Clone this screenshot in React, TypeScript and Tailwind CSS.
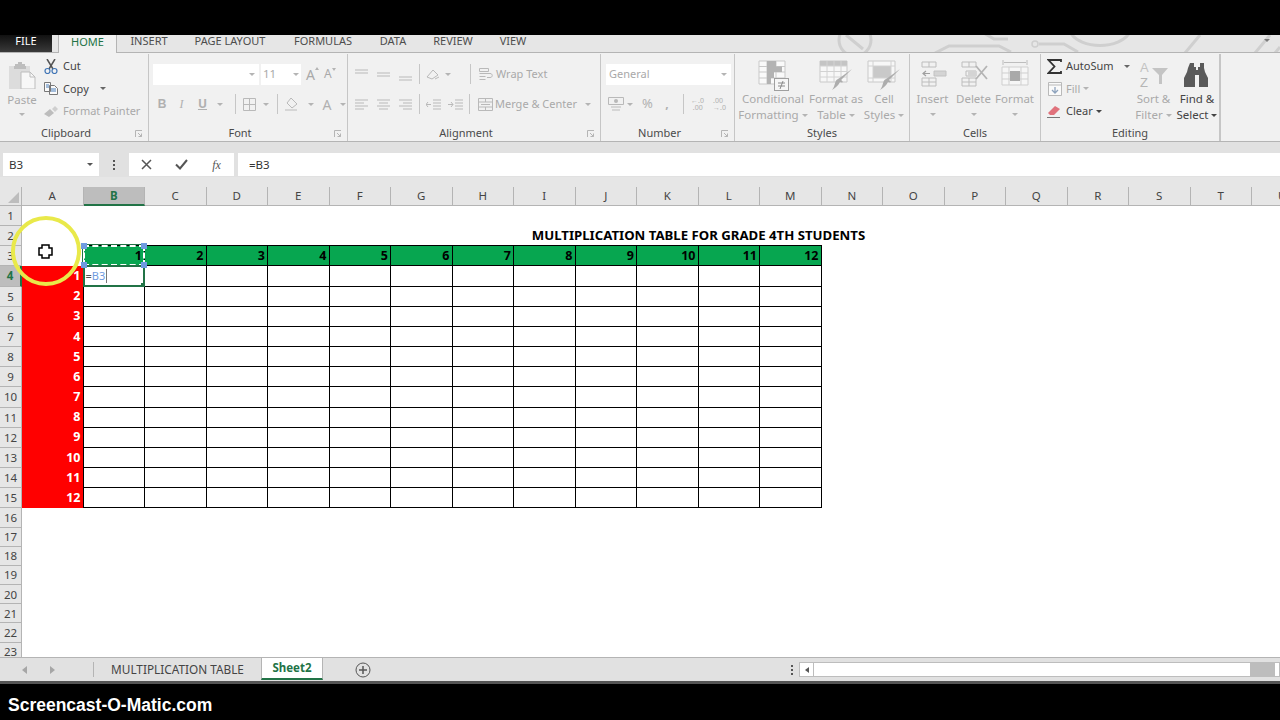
import React from 'react';

const SANS = '"Noto Sans", "Open Sans", sans-serif';
const COLS = ['A', 'B', 'C', 'D', 'E', 'F', 'G', 'H', 'I', 'J', 'K', 'L', 'M', 'N', 'O', 'P', 'Q', 'R', 'S', 'T', 'U'];
const ROWS = Array.from({ length: 23 }, (_, i) => i + 1);

function Caret({ className = 'border-t-[#b4b4b4]' }: { className?: string }) {
  return <span className={`inline-block h-0 w-0 border-x-[3px] border-t-[3px] border-x-transparent ${className}`} />;
}

function Slot({ w, children }: { w: number; children?: React.ReactNode }) {
  return (
    <div className="flex shrink-0 items-center justify-center" style={{ width: w }}>
      {children}
    </div>
  );
}

function Sep({ h = 'h-[20px]' }: { h?: string }) {
  return <div className={`w-px shrink-0 bg-[#c6c6c6] ${h}`} />;
}

function Launcher() {
  return (
    <svg width="8" height="8" viewBox="0 0 8 8" className="shrink-0">
      <path d="M0.500 7V0.500H7M3 3l3.500 3.500M6.500 3.500v3h-3" fill="none" stroke="#b5b5b5" />
    </svg>
  );
}

function GroupLabel({ children, launcher = true }: { children: string; launcher?: boolean }) {
  return (
    <div className={`relative flex h-[16px] items-center justify-center text-[11px] text-[#4a4a4a] ${launcher ? 'pr-[16px]' : ''}`}>
      {children}
      {launcher && (
        <span className="absolute right-[5px] top-[5px] flex">
          <Launcher />
        </span>
      )}
    </div>
  );
}

function Lines({ kind }: { kind: 'top' | 'mid' | 'bot' | 'left' | 'center' | 'right' }) {
  const d = {
    top: 'M1 2h13M1 5h13',
    mid: 'M1 5h13M1 8h13',
    bot: 'M1 9h13M1 12h13',
    left: 'M1 2h13M1 5h9M1 8h13M1 11h9',
    center: 'M1 2h13M3 5h9M1 8h13M3 11h9',
    right: 'M1 2h13M5 5h9M1 8h13M5 11h9',
  }[kind];
  return (
    <svg width="15" height="13" viewBox="0 0 15 13">
      <path d={d} stroke="#b9b9b9" fill="none" />
    </svg>
  );
}

function BigLabel({ lines, dark = false, caret = true }: { lines: string[]; dark?: boolean; caret?: boolean }) {
  return (
    <div className={`flex flex-col items-center text-[11.5px] leading-[16px] ${dark ? 'text-[#444444]' : 'text-[#a9a9a9]'}`}>
      <span className="whitespace-nowrap">{lines[0]}</span>
      <span className="flex items-center gap-[3px] whitespace-nowrap">
        {lines[1]}
        {caret && <Caret className={dark ? 'border-t-[#444444]' : 'border-t-[#b4b4b4]'} />}
      </span>
    </div>
  );
}

function TableBrush({ variant }: { variant: 'cond' | 'table' | 'cell' }) {
  if (variant === 'cond') {
    return (
      <svg width="31" height="31" viewBox="0 0 31 31">
        <path d="M1 1h26v23H1zM1 6.500h26M1 12h26M1 18h26M9 1v23M18 1v23" fill="#fafafa" stroke="#c9c9c9" />
        <path d="M9 1h9v5.500h-9zM9 6.500h15v5.500H9zM9 12h7v6H9zM9 18h4v6H9z" fill="#b3b3b3" />
        <rect x="16.500" y="18.500" width="14" height="12" fill="#f6f6f6" stroke="#9f9f9f" />
        <path d="M20 23h7M20 26h7M25 21l-3 8" stroke="#8a8a8a" fill="none" />
      </svg>
    );
  }
  return (
    <svg width="34" height="31" viewBox="0 0 34 31">
      <path d="M1 1h27v21H1z" fill="#f7f7f7" stroke="#c9c9c9" />
      {variant === 'table' ? (
        <g>
          <path d="M1 1h27v5H1z" fill="#c4c4c4" />
          <path d="M1 6h27M1 11.500h27M1 17h27M8 1v21M15 1v21M22 1v21" stroke="#d2d2d2" />
        </g>
      ) : (
        <g>
          <rect x="6" y="6" width="18" height="12" fill="#c9c9c9" />
          <path d="M1 6h27M1 18h27M6 1v21M24 1v21" stroke="#d2d2d2" />
        </g>
      )}
      <path d="M33 9L22 20c3 2 2 3-1 2-2 4-5 6-8 8 4-5 2-9 6-11l3-2z" fill="#adadad" />
    </svg>
  );
}

function Tab({ children, w }: { children: string; w: number }) {
  return (
    <div className="flex shrink-0 items-center justify-center pb-[4px] text-[11px] text-[#4d4d4d]" style={{ width: w }}>
      <span className="whitespace-nowrap">{children}</span>
    </div>
  );
}

function TabBar() {
  return (
    <div className="relative flex h-[18px] shrink-0 border-b border-[#b4b4b4] bg-[#e6e6e6]">
      <svg className="absolute left-[760px] top-0" width="520" height="17" viewBox="0 0 520 17">
        <g fill="none" stroke="#cfcfcf" strokeWidth="3">
          <circle cx="95" cy="5" r="16" />
          <path d="M86 0l17 14M175 18l14-7h50l12 6M248 4h-14l-12-7" />
          <circle cx="275" cy="9" r="3" strokeWidth="1.500" />
          <path d="M279 9h25l14 8M310-3c10 18 50 18 60 0M425 18l15-18M495 18l15-18M515 18l5-6" />
        </g>
      </svg>
      <div className="flex w-[52px] shrink-0 items-center justify-center bg-gradient-to-b from-[#111111] to-[#3a3a3a] pb-[4px] text-[11px] text-white">
        FILE
      </div>
      <div className="relative ml-[6px] mb-[-1px] flex w-[59px] shrink-0 items-center justify-center border-x border-[#b4b4b4] bg-[#f1f1f1] pb-[4px] text-[11px] text-[#217346]">
        HOME
      </div>
      <Tab w={64}>INSERT</Tab>
      <Tab w={98}>PAGE LAYOUT</Tab>
      <Tab w={88}>FORMULAS</Tab>
      <Tab w={52}>DATA</Tab>
      <Tab w={68}>REVIEW</Tab>
      <Tab w={52}>VIEW</Tab>
      <span className="absolute right-[10px] top-[4px] flex">
        <Caret className="border-t-[#7a7a7a]" />
      </span>
    </div>
  );
}

function Clipboard() {
  return (
    <div className="flex w-[149px] shrink-0 flex-col border-r border-[#c6c6c6]">
      <div className="flex h-[71px]">
        <div className="flex w-[44px] flex-col items-center pt-[8px]">
          <svg width="28" height="27" viewBox="0 0 28 27">
            <path d="M1 4h21v23H1z" fill="#dcdcdc" />
            <path d="M7 4V2h3V0h4v2h3v2h1v3H6V4z" fill="#bdbdbd" />
            <path d="M13 10h9l5 5v12H13z" fill="#f7f7f7" stroke="#bdbdbd" />
            <path d="M22 10v5h5" fill="none" stroke="#bdbdbd" />
          </svg>
          <span className="mt-[3px] text-[11.5px] leading-[15px] text-[#a9a9a9]">Paste</span>
          <span className="mt-[6px] flex">
            <Caret />
          </span>
        </div>
        <div className="flex flex-col pt-[1px]">
          <div className="flex h-[22.5px] items-center gap-[5px] text-[11px] text-[#444444]">
            <svg width="14" height="15" viewBox="0 0 14 15">
              <path d="M3 0l6 10M11 0L5 10" stroke="#555555" strokeWidth="1.500" fill="none" />
              <circle cx="3.500" cy="12" r="2.500" fill="none" stroke="#3f74b5" strokeWidth="1.200" />
              <circle cx="10.500" cy="12" r="2.500" fill="none" stroke="#3f74b5" strokeWidth="1.200" />
            </svg>
            Cut
          </div>
          <div className="flex h-[22.5px] items-center text-[11px] text-[#444444]">
            <svg width="14" height="13" viewBox="0 0 14 13" className="mr-[5px]">
              <path d="M0.500 0.500h6v9h-6zM5.500 3.500h5l3 3v6h-8z" fill="#fafafa" stroke="#777777" />
              <path d="M2 3h3M2 5h3M7 7h5M7 9h5" stroke="#4a7ebb" />
            </svg>
            Copy
            <span className="ml-[11px] flex">
              <Caret className="border-t-[#666666]" />
            </span>
          </div>
          <div className="flex h-[22.5px] items-center gap-[5px] text-[11px] text-[#a9a9a9]">
            <svg width="14" height="11" viewBox="0 0 14 11">
              <path d="M0 8l6-5 4 4-5 4z" fill="#bdbdbd" />
              <path d="M8 3l3-3 3 3-3 3z" fill="#cfcfcf" />
            </svg>
            Format Painter
          </div>
        </div>
      </div>
      <GroupLabel>Clipboard</GroupLabel>
    </div>
  );
}

function Font() {
  return (
    <div className="flex w-[199px] shrink-0 flex-col border-r border-[#c6c6c6]">
      <div className="h-[71px] pl-[4px] pt-[10px]">
        <div className="flex h-[20px] items-center">
          <div className="flex h-[21px] w-[106px] items-center justify-end bg-white pr-[4px]">
            <Caret />
          </div>
          <div className="ml-[2px] flex h-[21px] w-[40px] items-center justify-between bg-white px-[2px] text-[11.5px] text-[#a9a9a9]">
            11
            <Caret />
          </div>
          <div className="ml-[5px] flex items-center gap-[4px] text-[14px] text-[#a9a9a9]">
            <span className="flex w-[14px] items-start">
              A
              <svg width="4" height="3" viewBox="0 0 4 3" className="mt-[3px]">
                <path d="M0 3l2-3 2 3z" fill="#b4b4b4" />
              </svg>
            </span>
            <span className="flex w-[14px] items-start text-[12px]">
              A
              <svg width="4" height="3" viewBox="0 0 4 3" className="mt-[3px]">
                <path d="M0 0l2 3 2-3z" fill="#b4b4b4" />
              </svg>
            </span>
          </div>
        </div>
        <div className="mt-[10px] flex h-[20px] items-center text-[#b0b0b0]">
          <Slot w={18}><span className="text-[12px] font-bold" style={{ fontFamily: 'Liberation Sans' }}>B</span></Slot>
          <Slot w={21}><span className="text-[12px] italic" style={{ fontFamily: 'Liberation Serif' }}>I</span></Slot>
          <Slot w={21}><span className="text-[12px] font-bold underline">U</span></Slot>
          <Slot w={14}><Caret /></Slot>
          <Slot w={8} />
          <Sep />
          <Slot w={27}>
            <svg width="13" height="13" viewBox="0 0 13 13">
              <path d="M0.500 0.500h12v12H0.500zM6.500 0.500v12M0.500 6.500h12" fill="none" stroke="#b9b9b9" />
            </svg>
          </Slot>
          <Slot w={6}><Caret /></Slot>
          <Slot w={8} />
          <Sep />
          <Slot w={29}>
            <svg width="15" height="14" viewBox="0 0 15 14">
              <path d="M6 1l6 6-5 4-5-5z" fill="none" stroke="#b9b9b9" />
              <path d="M0 13h12" stroke="#d6d6d6" strokeWidth="2" />
            </svg>
          </Slot>
          <Slot w={7}><Caret /></Slot>
          <Slot w={26}><span className="text-[14px]">A</span></Slot>
          <Slot w={6}><Caret /></Slot>
        </div>
      </div>
      <GroupLabel>Font</GroupLabel>
    </div>
  );
}

function Alignment() {
  return (
    <div className="flex w-[253px] shrink-0 flex-col border-r border-[#c6c6c6]">
      <div className="h-[71px] pl-[3px] pt-[11px]">
        <div className="flex h-[18px] items-center">
          <Slot w={21}><Lines kind="top" /></Slot>
          <Slot w={22}><Lines kind="mid" /></Slot>
          <Slot w={22}><Lines kind="bot" /></Slot>
          <Slot w={3} />
          <Sep />
          <Slot w={26}>
            <svg width="14" height="13" viewBox="0 0 14 13">
              <path d="M1 9l6-7 5 5-6 4zM9 11l4-2" fill="none" stroke="#b9b9b9" />
            </svg>
          </Slot>
          <Slot w={4}><Caret /></Slot>
          <Slot w={20} />
          <Sep />
          <Slot w={8} />
          <svg width="15" height="13" viewBox="0 0 15 13" className="shrink-0">
            <path d="M0.500 0.500h9v3h-9zM0.500 5.500h11M0.500 8.500h6M0.500 11.500h6M11 5.500c3 0 3 4 0 4H8" fill="none" stroke="#b9b9b9" />
          </svg>
          <span className="ml-[2px] whitespace-nowrap text-[11px] text-[#a9a9a9]">Wrap Text</span>
        </div>
        <div className="mt-[12px] flex h-[18px] items-center">
          <Slot w={21}><Lines kind="left" /></Slot>
          <Slot w={22}><Lines kind="center" /></Slot>
          <Slot w={22}><Lines kind="right" /></Slot>
          <Slot w={3} />
          <Sep />
          <Slot w={27}>
            <svg width="15" height="11" viewBox="0 0 15 11">
              <path d="M7 1h8M7 4h8M7 7h8M7 10h8M5 5.500H0M2 3L0 5.500 2 8" fill="none" stroke="#b9b9b9" />
            </svg>
          </Slot>
          <Slot w={17}>
            <svg width="15" height="11" viewBox="0 0 15 11">
              <path d="M7 1h8M7 4h8M7 7h8M7 10h8M0 5.500h5M3 3l2 2.500L3 8" fill="none" stroke="#b9b9b9" />
            </svg>
          </Slot>
          <Slot w={5} />
          <Sep />
          <Slot w={8} />
          <svg width="15" height="13" viewBox="0 0 15 13" className="shrink-0">
            <path d="M0.500 0.500h14v12H0.500zM0.500 4h14M0.500 9h14M7.500 0.500V4M7.500 9v3.500M3 6.500h9" fill="none" stroke="#b9b9b9" />
          </svg>
          <span className="ml-[2px] whitespace-nowrap text-[11px] text-[#a9a9a9]">Merge &amp; Center</span>
          <span className="ml-[8px] flex">
            <Caret />
          </span>
        </div>
      </div>
      <GroupLabel>Alignment</GroupLabel>
    </div>
  );
}

function NumberGroup() {
  return (
    <div className="flex w-[134px] shrink-0 flex-col border-r border-[#c6c6c6]">
      <div className="h-[71px] pl-[5px] pt-[10px]">
        <div className="flex h-[21px] w-[125px] items-center justify-between bg-white pl-[3px] pr-[4px] text-[11px] text-[#a9a9a9]">
          General
          <Caret />
        </div>
        <div className="mt-[9px] flex h-[20px] items-center text-[#b0b0b0]">
          <Slot w={20}>
            <svg width="16" height="14" viewBox="0 0 16 14">
              <path d="M0.500 0.500h15v7H0.500z" fill="none" stroke="#b9b9b9" />
              <circle cx="8" cy="4" r="2" fill="#b9b9b9" />
              <path d="M3 9h10v2H3zM4 12h8v2H4z" fill="#d6d6d6" />
            </svg>
          </Slot>
          <Slot w={8}><Caret /></Slot>
          <Slot w={27}><span className="text-[13px]">%</span></Slot>
          <Slot w={12}><span className="text-[12px] font-bold">,</span></Slot>
          <Slot w={10} />
          <Sep />
          <Slot w={27}>
            <span className="text-[7px] leading-[7px]">←.0<br />&nbsp;.00</span>
          </Slot>
          <Slot w={17}>
            <span className="text-[7px] leading-[7px]">.00<br />→.0</span>
          </Slot>
        </div>
      </div>
      <GroupLabel>Number</GroupLabel>
    </div>
  );
}

function Styles() {
  return (
    <div className="flex w-[175px] shrink-0 flex-col border-r border-[#c6c6c6]">
      <div className="flex h-[71px] pt-[6px]">
        <div className="flex w-[76px] flex-col items-center">
          <TableBrush variant="cond" />
          <BigLabel lines={['Conditional', 'Formatting']} />
        </div>
        <div className="flex w-[50px] flex-col items-center">
          <TableBrush variant="table" />
          <BigLabel lines={['Format as', 'Table']} />
        </div>
        <div className="flex w-[46px] flex-col items-center">
          <TableBrush variant="cell" />
          <BigLabel lines={['Cell', 'Styles']} />
        </div>
      </div>
      <GroupLabel launcher={false}>Styles</GroupLabel>
    </div>
  );
}

function CellTool({ label, children }: { label: string; children: React.ReactNode }) {
  return (
    <div className="flex w-[41px] flex-col items-center">
      <div className="flex h-[31px] items-start">{children}</div>
      <span className="text-[11.5px] leading-[16px] text-[#a9a9a9]">{label}</span>
      <span className="mt-[6px] flex">
        <Caret />
      </span>
    </div>
  );
}

function Cells() {
  return (
    <div className="flex w-[131px] shrink-0 flex-col border-r border-[#c6c6c6]">
      <div className="flex h-[71px] pl-[2px] pt-[6px]">
        <CellTool label="Insert">
          <svg width="28" height="27" viewBox="0 0 28 27">
            <path d="M3 2h14v5H3zM10 2v5M3 18h14v8H3zM3 22h14M10 18v8" fill="none" stroke="#bdbdbd" />
            <path d="M15 11h12v5H15z" fill="#d4d4d4" stroke="#c2c2c2" />
            <path d="M11 13.500H4M7 11l-3 2.500L7 16" fill="none" stroke="#9f9f9f" strokeWidth="1.200" />
          </svg>
        </CellTool>
        <CellTool label="Delete">
          <svg width="30" height="27" viewBox="0 0 30 27">
            <path d="M3 2h14v5H3zM10 2v5M3 18h14v8H3zM3 22h14M10 18v8M7 11h10v5H7z" fill="none" stroke="#bdbdbd" />
            <path d="M9 11h8v5H9z" fill="#d4d4d4" />
            <path d="M17 6l11 13M28 6L17 19" stroke="#b4b4b4" strokeWidth="1.800" />
          </svg>
        </CellTool>
        <CellTool label="Format">
          <svg width="28" height="30" viewBox="0 0 28 30">
            <path d="M2 0v5M26 0v5M3 2.500h22" stroke="#bdbdbd" fill="none" />
            <path d="M1 7h26v18H1zM8 7v18M20 7v18M1 13h26M1 19h26" fill="#f6f6f6" stroke="#cfcfcf" />
            <rect x="9" y="11" width="10" height="10" fill="#a9a9a9" />
          </svg>
        </CellTool>
      </div>
      <GroupLabel launcher={false}>Cells</GroupLabel>
    </div>
  );
}

function Editing() {
  return (
    <div className="flex w-[180px] shrink-0 flex-col border-r-2 border-[#c6c6c6]">
      <div className="flex h-[71px]">
        <div className="flex w-[94px] flex-col pl-[6px] pt-[1px]">
          <div className="flex h-[22.5px] items-center text-[11px] text-[#444444]">
            <svg width="15" height="15" viewBox="0 0 15 15" className="mr-[4px]">
              <path d="M14 3V1H1.500L7.500 7.500 1.500 14H14v-2" fill="none" stroke="#333333" strokeWidth="1.800" />
            </svg>
            AutoSum
            <span className="ml-[10px] flex">
              <Caret className="border-t-[#666666]" />
            </span>
          </div>
          <div className="flex h-[22.5px] items-center text-[11px] text-[#a9a9a9]">
            <svg width="14" height="14" viewBox="0 0 14 14" className="ml-[1px] mr-[4px]">
              <path d="M0.500 0.500h13v13H0.500zM0.500 3h13" fill="#fafafa" stroke="#b9b9b9" />
              <path d="M7 5v6M4 8l3 3 3-3" fill="none" stroke="#8ea3bd" strokeWidth="1.300" />
            </svg>
            Fill
            <span className="ml-[3px] flex">
              <Caret />
            </span>
          </div>
          <div className="flex h-[22.5px] items-center text-[11px] text-[#444444]">
            <svg width="14" height="13" viewBox="0 0 14 13" className="mr-[5px]">
              <path d="M1 8l7-7 5 3-6 6H3z" fill="#e0727c" />
              <path d="M0 12.500h13" stroke="#777777" />
            </svg>
            Clear
            <span className="ml-[3px] flex">
              <Caret className="border-t-[#444444]" />
            </span>
          </div>
        </div>
        <div className="flex w-[37px] flex-col items-center pt-[7px]">
          <svg width="30" height="30" viewBox="0 0 30 30">
            <text x="1" y="11" fontSize="13" fill="#c2c2c2" fontFamily="Liberation Sans">A</text>
            <text x="1" y="26" fontSize="13" fill="#b5b5b5" fontFamily="Liberation Sans">Z</text>
            <path d="M13 7h16l-6 7v9h-3v-9z" fill="#c4c4c4" />
          </svg>
          <BigLabel lines={['Sort &', 'Filter']} />
        </div>
        <div className="ml-[8px] flex w-[34px] flex-col items-center pt-[8px]">
          <svg width="26" height="26" viewBox="0 0 26 26">
            <path d="M6 1h4v4h2v3h2V5h2V1h4v5l1 4 3 6v9H15V13h-4v12H0v-9l3-6 1-4z" fill="#5a5a5a" />
          </svg>
          <div className="mt-[3px]">
            <BigLabel lines={['Find &', 'Select']} dark />
          </div>
        </div>
      </div>
      <GroupLabel launcher={false}>Editing</GroupLabel>
    </div>
  );
}

function Ribbon() {
  return (
    <div className="flex h-[89px] shrink-0 border-b border-[#b4b4b4] bg-[#f1f1f1] pt-[1px]">
      <Clipboard />
      <Font />
      <Alignment />
      <NumberGroup />
      <Styles />
      <Cells />
      <Editing />
    </div>
  );
}

function FormulaBar() {
  return (
    <div className="flex h-[35px] shrink-0 items-start bg-[#e1e1e1] pt-[11px]">
      <div className="ml-[3px] flex h-[23px] w-[96px] items-center justify-between bg-white pl-[6px] pr-[6px] text-[11.5px] text-[#333333]">
        B3
        <Caret className="border-t-[#555555]" />
      </div>
      <div className="flex h-[23px] w-[30px] flex-col items-center justify-center gap-[2px]">
        <span className="h-[2px] w-[2px] bg-[#555555]" />
        <span className="h-[2px] w-[2px] bg-[#555555]" />
        <span className="h-[2px] w-[2px] bg-[#555555]" />
      </div>
      <div className="flex h-[23px] w-[105px] items-center bg-white">
        <Slot w={35}>
          <svg width="11" height="11" viewBox="0 0 11 11">
            <path d="M1 1l9 9M10 1l-9 9" stroke="#555555" strokeWidth="1.500" />
          </svg>
        </Slot>
        <Slot w={35}>
          <svg width="13" height="11" viewBox="0 0 13 11">
            <path d="M1 5.500L5 9.500 12 1" fill="none" stroke="#555555" strokeWidth="2" />
          </svg>
        </Slot>
        <Slot w={35}>
          <span className="text-[12px] italic text-[#555555]" style={{ fontFamily: 'Liberation Serif' }}>fx</span>
        </Slot>
      </div>
      <div className="ml-[4px] flex h-[23px] flex-1 items-center bg-white pl-[11px] text-[11.5px] text-[#333333]">=B3</div>
    </div>
  );
}

function Handle({ className }: { className: string }) {
  return <span className={`absolute z-10 h-[6px] w-[6px] bg-[#6f9be0] ${className}`} />;
}

function Sheet() {
  return (
    <div className="relative h-[470px] shrink-0 overflow-hidden bg-white">
      <div className="grid grid-cols-[22px_repeat(21,61.5px)] grid-rows-[19px_repeat(15,20.17px)_repeat(8,19.2px)]">
        <div className="flex items-end justify-end border-b border-r border-[#b4b4b4] bg-[#e6e6e6] p-[2px]">
          <span className="h-0 w-0 border-b-[11px] border-l-[11px] border-b-[#bdbdbd] border-l-transparent" />
        </div>
        {COLS.map((c) => (
          <div
            key={c}
            className={
              c === 'B'
                ? 'flex items-center justify-center border-b-2 border-r border-b-[#217346] border-r-[#b4b4b4] bg-[#bdbdbd] text-[11.5px] font-bold text-[#217346]'
                : 'flex items-center justify-center border-b border-r border-[#b4b4b4] bg-[#e6e6e6] text-[11.5px] text-[#444444]'
            }
          >
            {c}
          </div>
        ))}
        {ROWS.map((r) => (
          <React.Fragment key={r}>
            <div
              className={
                r === 4
                  ? 'flex items-center justify-center border-b border-r-2 border-b-[#b4b4b4] border-r-[#217346] bg-[#bdbdbd] text-[11.5px] font-bold text-[#217346]'
                  : 'flex items-center justify-center border-b border-r border-[#b4b4b4] bg-[#e6e6e6] text-[11.5px] text-[#444444]'
              }
            >
              {r}
            </div>
            {COLS.map((c, i) => {
              if (r === 2 && c === 'I') {
                return (
                  <div key={c} className="col-span-6 flex items-center justify-center whitespace-nowrap text-[13.2px] font-bold text-black">
                    MULTIPLICATION TABLE FOR GRADE 4TH STUDENTS
                  </div>
                );
              }
              if (r === 2 && i > 8 && i < 14) return null;
              const inTableCol = i >= 1 && i <= 12;
              if (r === 3 && inTableCol) {
                return (
                  <div key={c} className="relative mt-[-1px] flex items-center justify-end border-b border-r border-t border-black bg-[#07a650] pr-[2px] text-[12.5px] font-bold text-black">
                    {i}
                    {i === 1 && (
                      <>
                        <span className="absolute inset-[-1px] border-2 border-dashed border-white outline outline-1 outline-[#217346]" />
                        <Handle className="left-[-3px] top-[-3px]" />
                        <Handle className="right-[-3px] top-[-3px]" />
                        <Handle className="bottom-[-3px] left-[-3px]" />
                        <Handle className="bottom-[-3px] right-[-3px]" />
                      </>
                    )}
                  </div>
                );
              }
              if (r >= 4 && r <= 15 && i === 0) {
                return (
                  <div key={c} className="flex items-center justify-end border-r border-black bg-[#ff0000] pr-[2px] text-[12.5px] font-bold text-white">
                    {r - 3}
                  </div>
                );
              }
              if (r >= 4 && r <= 15 && inTableCol) {
                return (
                  <div key={c} className="relative border-b border-r border-black bg-white">
                    {r === 4 && i === 1 && (
                      <div className="absolute inset-[-1px] flex items-center border-2 border-[#217346] bg-white pl-[1px] text-[11px] text-[#6f9be0]">
                        <span className="text-[#555555]">=</span>B3
                        <span className="ml-[1px] h-[14px] w-px bg-[#777777]" />
                        <span className="absolute bottom-[-3px] right-[-3px] h-[5px] w-[5px] bg-[#217346]" />
                      </div>
                    )}
                  </div>
                );
              }
              return <div key={c} />;
            })}
          </React.Fragment>
        ))}
      </div>
      {/* recorder's cursor highlight */}
      <svg className="absolute left-[8px] top-[29px]" width="76" height="76" viewBox="0 0 76 76">
        <circle cx="38" cy="35" r="33" fill="none" stroke="#e9e94a" strokeWidth="4" />
        <path d="M34 29h7v3h3v7h-3v3h-7v-3h-3v-7h3z" fill="white" stroke="black" strokeWidth="1.500" />
      </svg>
    </div>
  );
}

function SheetTabs() {
  return (
    <div className="flex h-[27px] shrink-0 items-stretch border-b-[3px] border-t border-b-[#555555] border-t-[#b4b4b4] bg-[#e1e1e1]">
      <div className="my-[4px] flex w-[94px] items-center border-r border-[#b4b4b4] pl-[22px]">
        <span className="h-0 w-0 border-y-[4px] border-r-[5px] border-y-transparent border-r-[#a6a6a6]" />
        <span className="ml-[23px] h-0 w-0 border-y-[4px] border-l-[5px] border-y-transparent border-l-[#a6a6a6]" />
      </div>
      <div className="flex w-[167px] items-center justify-center text-[11.8px] text-[#444444]">MULTIPLICATION TABLE</div>
      <div className="mb-[1px] flex w-[62px] items-center justify-center border-x border-b-2 border-x-[#b4b4b4] border-b-[#217346] bg-white text-[11.5px] font-bold text-[#217346]">
        Sheet2
      </div>
      <div className="flex w-[80px] items-center justify-center">
        <svg width="16" height="16" viewBox="0 0 16 16">
          <circle cx="8" cy="8" r="7" fill="none" stroke="#555555" />
          <path d="M8 4v8M4 8h8" stroke="#555555" strokeWidth="1.500" />
        </svg>
      </div>
      <div className="flex flex-1 items-center pl-[381px]">
        <div className="flex h-[16px] w-[15px] flex-col items-center justify-center gap-[2px]">
          <span className="h-[2px] w-[2px] bg-[#555555]" />
          <span className="h-[2px] w-[2px] bg-[#555555]" />
          <span className="h-[2px] w-[2px] bg-[#555555]" />
        </div>
        <div className="flex h-[15px] flex-1 items-stretch border border-[#bdbdbd] bg-white">
          <div className="flex w-[14px] items-center justify-center border-r border-[#bdbdbd]">
            <span className="h-0 w-0 border-y-[3px] border-r-[4px] border-y-transparent border-r-[#555555]" />
          </div>
          <div className="flex-1" />
          <div className="w-[25px] bg-[#bdbdbd]" />
          <div className="w-[4px]" />
        </div>
      </div>
    </div>
  );
}

export default function App() {
  return (
    <div className="flex h-[720px] w-[1280px] flex-col overflow-hidden bg-black" style={{ fontFamily: SANS }}>
      <div className="h-[35px] shrink-0 bg-black" />
      <TabBar />
      <Ribbon />
      <FormulaBar />
      <div className="h-[10px] shrink-0 bg-[#e6e6e6]" />
      <Sheet />
      <SheetTabs />
      <div className="flex flex-1 items-center pl-[8px] pt-[7px] text-[17.5px] font-bold text-white" style={{ fontFamily: '"Liberation Sans", sans-serif' }}>
        Screencast-O-Matic.com
      </div>
    </div>
  );
}
